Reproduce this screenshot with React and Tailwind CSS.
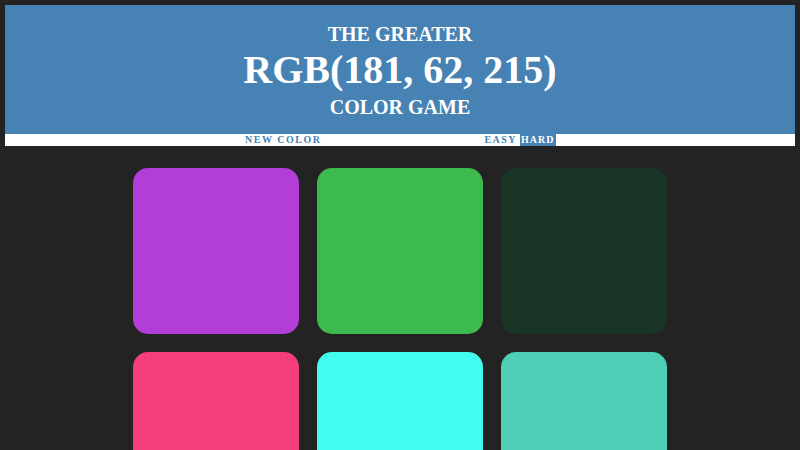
export default function App() {
  const squares = [
    '#b23ed7',
    '#3dba4e',
    '#1a3426',
    '#f43e7b',
    '#42fcef',
    '#4fcfb6',
  ]

  return (
    <div className="min-h-[450px] bg-[#232323] p-[5px] font-['Liberation_Serif',serif]">
      <div className="bg-[#4682b4] text-white text-center uppercase font-bold pt-[19px] pb-[17px] leading-none">
        <div className="text-[20px]">The Greater</div>
        <div className="text-[40px] mt-[6px]">RGB(181, 62, 215)</div>
        <div className="text-[20px] mt-[7px]">Color Game</div>
      </div>
      <div className="bg-white h-[12px] flex items-center text-[10px] font-bold uppercase text-[#4682b4] leading-none">
        <button className="ml-[240px] px-0 tracking-[1.5px] uppercase">New Color</button>
        <div className="ml-[163px] flex h-full items-center">
          <button className="uppercase tracking-[1.5px] px-0 h-full">Easy</button>
          <button className="uppercase tracking-[1px] ml-[3px] px-[1px] h-full bg-[#4682b4] text-white">Hard</button>
        </div>
      </div>
      <div className="w-[534px] mx-auto mt-[22px] grid grid-cols-3 gap-[18px]">
        {squares.map((c, i) => (
          <div key={i} className="h-[166px] rounded-[15px]" style={{ backgroundColor: c }} />
        ))}
      </div>
    </div>
  )
}
